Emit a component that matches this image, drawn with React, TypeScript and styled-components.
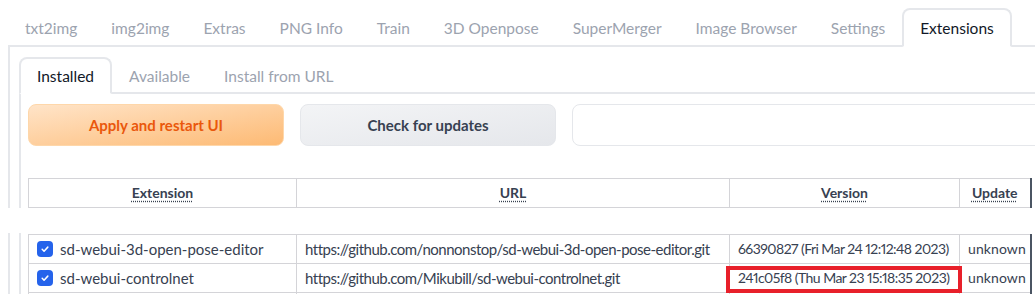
import { FunctionComponent } from 'react';
import { createGlobalStyle, css, styled } from 'styled-components';

const GlobalStyle = createGlobalStyle`
    html, body {
        margin: 0;
        padding: 0;
        background: #ffffff;
        overflow: hidden;
    }
    body {
        font-family: Lato, 'Noto Sans', sans-serif;
        color: #1f2937;
    }
`;

const outerTabs = [
    'txt2img',
    'img2img',
    'Extras',
    'PNG Info',
    'Train',
    '3D Openpose',
    'SuperMerger',
    'Image Browser',
    'Settings',
    'Extensions',
];

const innerTabs = ['Installed', 'Available', 'Install from URL'];

const columns = [
    { title: 'Extension', width: 268 },
    { title: 'URL', width: 433 },
    { title: 'Version', width: 230 },
    { title: 'Update', width: 71 },
];

const extensions = [
    {
        name: 'sd-webui-3d-open-pose-editor',
        url: 'https://github.com/nonnonstop/sd-webui-3d-open-pose-editor.git',
        version: '66390827 (Fri Mar 24 12:12:48 2023)',
        update: 'unknown',
        marked: false,
    },
    {
        name: 'sd-webui-controlnet',
        url: 'https://github.com/Mikubill/sd-webui-controlnet.git',
        version: '241c05f8 (Thu Mar 23 15:18:35 2023)',
        update: 'unknown',
        marked: true,
    },
    {
        name: 'sd-webui-supermerger',
        url: 'https://github.com/hako-mikan/sd-webui-supermerger.git',
        version: 'f2be9fa8 (Sun Mar 19 10:45:13 2023)',
        update: 'unknown',
        marked: false,
    },
];

const CheckIcon: FunctionComponent = () => (
    <svg width="10" height="10" viewBox="0 0 16 16" fill="none">
        <path d="M3.5 8.5l3 3 6-6.5" stroke="#ffffff" strokeWidth="2.4" strokeLinecap="round" strokeLinejoin="round" />
    </svg>
);

const ColGroup: FunctionComponent = () => (
    <colgroup>
        {columns.map((c) => (
            <col key={c.title} style={{ width: c.width }} />
        ))}
    </colgroup>
);

const App: FunctionComponent = () => {
    return (
        <>
            <GlobalStyle />
            <StyledPage>
                <StyledTabBar>
                    {outerTabs.map((t) => (
                        <StyledTab key={t} $selected={t === 'Extensions'}>
                            {t}
                        </StyledTab>
                    ))}
                </StyledTabBar>
                <StyledOuterPanel>
                    <StyledInnerTabBar>
                        {innerTabs.map((t) => (
                            <StyledInnerTab key={t} $selected={t === 'Installed'}>
                                {t}
                            </StyledInnerTab>
                        ))}
                    </StyledInnerTabBar>
                    <StyledInnerPanel>
                        <StyledButtonRow>
                            <StyledButton $variant="primary">Apply and restart UI</StyledButton>
                            <StyledButton $variant="secondary">Check for updates</StyledButton>
                            <StyledTextBox />
                        </StyledButtonRow>
                        <StyledTable>
                            <ColGroup />
                            <thead>
                                <tr>
                                    {columns.map((c) => (
                                        <StyledHeadCell key={c.title}>
                                            <abbr>{c.title}</abbr>
                                        </StyledHeadCell>
                                    ))}
                                </tr>
                            </thead>
                        </StyledTable>
                    </StyledInnerPanel>
                </StyledOuterPanel>
                <StyledSeam />
                <StyledOuterPanel $continued>
                    <StyledInnerPanel $continued>
                        <StyledTable>
                            <ColGroup />
                            <tbody>
                                {extensions.map((e) => (
                                    <tr key={e.name}>
                                        <StyledCell>
                                            <StyledNameCell>
                                                <StyledCheckbox>
                                                    <CheckIcon />
                                                </StyledCheckbox>
                                                {e.name}
                                            </StyledNameCell>
                                        </StyledCell>
                                        <StyledCell $kind="url">{e.url}</StyledCell>
                                        <StyledCell $kind="version" $marked={e.marked}>
                                            {e.version}
                                        </StyledCell>
                                        <StyledCell $kind="update">{e.update}</StyledCell>
                                    </tr>
                                ))}
                            </tbody>
                        </StyledTable>
                    </StyledInnerPanel>
                </StyledOuterPanel>
            </StyledPage>
        </>
    );
};

const tabStyles = css<{ $selected?: boolean }>`
    box-sizing: border-box;
    display: flex;
    align-items: center;
    padding: 0 16px;
    font-size: 15.5px;
    white-space: nowrap;
    border: 1px solid transparent;
    border-radius: 8px 8px 0 0;
    color: ${(p) => (p.$selected ? '#111827' : '#9ca3af')};
    ${(p) =>
        p.$selected &&
        css`
            background: #ffffff;
            border-color: #e5e7eb;
            border-bottom-color: #ffffff;
            border-width: 2px 2px 1px 2px;
        `}
`;

const StyledPage = styled.div`
    width: 1080px;
    padding: 8px 0 0 8px;
`;

const StyledTabBar = styled.div`
    display: flex;
    height: 37px;
    border-bottom: 2px solid #e5e7eb;
`;

const StyledTab = styled.div<{ $selected?: boolean }>`
    ${tabStyles}
    height: 39px;
    margin-bottom: -2px;
`;

const StyledOuterPanel = styled.div<{ $continued?: boolean }>`
    border-left: 2px solid #e5e7eb;
    padding: ${(p) => (p.$continued ? '0 0 0 9px' : '10px 0 0 9px')};
`;

const StyledInnerTabBar = styled.div`
    display: flex;
    height: 35px;
    border-bottom: 2px solid #e5e7eb;
`;

const StyledInnerTab = styled.div<{ $selected?: boolean }>`
    ${tabStyles}
    height: 37px;
    margin-bottom: -2px;
`;

const StyledInnerPanel = styled.div<{ $continued?: boolean }>`
    border-left: 2px solid #e5e7eb;
    padding: ${(p) => (p.$continued ? '1px 0 0 7px' : '10px 0 0 7px')};
`;

const StyledButtonRow = styled.div`
    display: flex;
    gap: 16px;
    margin-bottom: 32px;
`;

const StyledButton = styled.button<{ $variant: 'primary' | 'secondary' }>`
    width: 256px;
    height: 42px;
    border-radius: 8px;
    font-family: inherit;
    font-size: 15px;
    font-weight: 700;
    cursor: pointer;
    border: 1px solid ${(p) => (p.$variant === 'primary' ? '#fed7aa' : '#e5e7eb')};
    color: ${(p) => (p.$variant === 'primary' ? '#ea580c' : '#374151')};
    background: ${(p) =>
        p.$variant === 'primary'
            ? 'linear-gradient(to bottom right, #ffe4c8, #fdba74)'
            : 'linear-gradient(to bottom right, #f3f4f6, #e5e7eb)'};
`;

const StyledTextBox = styled.div`
    flex: 1;
    height: 42px;
    box-sizing: border-box;
    border: 1px solid #e5e7eb;
    border-radius: 8px;
    background: #ffffff;
`;

const StyledTable = styled.table`
    table-layout: fixed;
    border-collapse: collapse;
    width: 1002px;
    font-size: 15px;
    line-height: 20px;
    color: #374151;
    border-right: 2px solid #4b5563;
`;

const StyledHeadCell = styled.th`
    height: 28px;
    padding: 0 8px;
    border: 1px solid #d4d4d8;
    font-size: 14px;
    font-weight: 700;
    text-align: center;
    abbr {
        text-decoration: underline dotted;
        text-underline-offset: 3px;
    }
`;

const StyledCell = styled.td<{ $marked?: boolean; $kind?: 'url' | 'version' | 'update' }>`
    position: relative;
    height: 28px;
    padding: 0 8px;
    border: 1px solid #d4d4d8;
    white-space: nowrap;
    ${(p) =>
        p.$kind === 'url' &&
        css`
            letter-spacing: -0.5px;
        `}
    ${(p) =>
        p.$kind === 'version' &&
        css`
            font-size: 14px;
            font-variant-numeric: proportional-nums;
            letter-spacing: -0.55px;
        `}
    ${(p) =>
        p.$kind === 'update' &&
        css`
            font-size: 14px;
            letter-spacing: 0.1px;
        `}
    &::after {
        content: '';
        display: ${(p) => (p.$marked ? 'block' : 'none')};
        position: absolute;
        left: -4px;
        right: -3px;
        top: 2px;
        bottom: -1px;
        border: 4px solid #e8202a;
        pointer-events: none;
    }
`;

const StyledNameCell = styled.div`
    display: flex;
    align-items: center;
    gap: 7px;
`;

const StyledCheckbox = styled.span`
    display: inline-flex;
    align-items: center;
    justify-content: center;
    width: 16px;
    height: 16px;
    border-radius: 4px;
    background: #2563eb;
`;

const StyledSeam = styled.div`
    height: 25px;
    background: #ffffff;
`;

export default App;
